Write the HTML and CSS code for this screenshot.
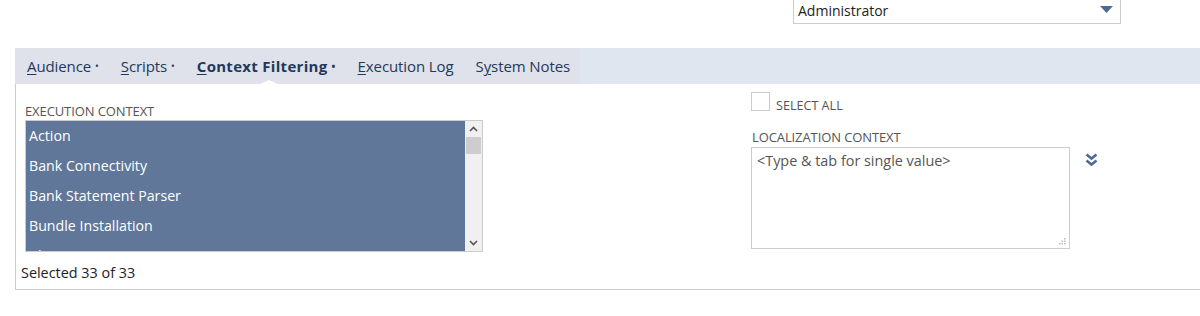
FILE: index.html
```html
<!DOCTYPE html>
<html>
<head>
<meta charset="utf-8">
<link rel="stylesheet" href="styles.css">
</head>
<body>
<div class="top">
  <div class="select">
    <span class="select-text">Administrator</span>
    <svg class="select-arrow" width="13" height="7" viewBox="0 0 13 7"><path d="M0 0H13L6.5 7Z" fill="#4d6a96"/></svg>
  </div>
</div>
<div class="tabbar">
  <div class="tabs">
    <span class="tab"><u>A</u>udience<span class="dot">•</span></span>
    <span class="tab"><u>S</u>cripts<span class="dot">•</span></span>
    <span class="tab active"><u>C</u>ontext Filtering<span class="dot">•</span></span>
    <span class="tab"><u>E</u>xecution Log</span>
    <span class="tab">S<u>y</u>stem Notes</span>
  </div>
</div>
<div class="panel">
  <div class="col-left">
    <div class="label">EXECUTION CONTEXT</div>
    <div class="multiselect">
      <div class="options">
        <div class="opt">Action</div>
        <div class="opt">Bank Connectivity</div>
        <div class="opt">Bank Statement Parser</div>
        <div class="opt">Bundle Installation</div>
        <div class="opt">Client</div>
      </div>
      <div class="scrollbar">
        <svg class="sb-arrow" width="9" height="6" viewBox="0 0 9 6"><path d="M1 5L4.5 1.5L8 5" fill="none" stroke="#555" stroke-width="1.6"/></svg>
        <div class="thumb"></div>
        <div class="sb-fill"></div>
        <svg class="sb-arrow" width="9" height="6" viewBox="0 0 9 6"><path d="M1 1L4.5 4.5L8 1" fill="none" stroke="#555" stroke-width="1.6"/></svg>
      </div>
    </div>
    <div class="count">Selected 33 of 33</div>
  </div>
  <div class="col-right">
    <div class="checkrow"><span class="checkbox"></span><span class="label-inline">SELECT ALL</span></div>
    <div class="label">LOCALIZATION CONTEXT</div>
    <div class="textrow">
      <div class="textarea">
        <span class="placeholder">&lt;Type &amp; tab for single value&gt;</span>
        <svg class="grip" width="7" height="7" viewBox="0 0 7 7" fill="#bbb"><rect x="5" y="0" width="1.5" height="1.5"/><rect x="2.5" y="2.5" width="1.5" height="1.5"/><rect x="5" y="2.5" width="1.5" height="1.5"/><rect x="0" y="5" width="1.5" height="1.5"/><rect x="2.5" y="5" width="1.5" height="1.5"/><rect x="5" y="5" width="1.5" height="1.5"/></svg>
      </div>
      <svg class="dchev" width="13" height="14" viewBox="0 0 13 14"><path d="M1.5 1.5L6.5 5.5L11.5 1.5M1.5 7.5L6.5 11.5L11.5 7.5" fill="none" stroke="#4d6a96" stroke-width="2.6"/></svg>
    </div>
  </div>
</div>
</body>
</html>
```

FILE: styles.css
```css
html, body {
  margin: 0;
  padding: 0;
  background: #fff;
  font-family: "Open Sans", "Liberation Sans", sans-serif;
  width: 1200px;
  height: 316px;
  overflow: hidden;
}
.top {
  height: 48px;
  display: flex;
}
.select {
  margin-left: 793px;
  margin-top: -7px;
  width: 328px;
  height: 31px;
  border: 1px solid #ccc;
  display: flex;
  align-items: flex-end;
  justify-content: space-between;
  padding: 0 7px 3px 4px;
  box-sizing: border-box;
}
.select-text {
  font-size: 14px;
  color: #222;
  line-height: 18px;
}
.select-arrow {
  margin-bottom: 7px;
}
.tabbar {
  margin-left: 15px;
  height: 36px;
  background: #dfe6f0;
  display: flex;
}
.tabs {
  width: 565px;
  background: #dfe2ea;
  display: flex;
  align-items: center;
  padding-left: 12px;
  box-sizing: border-box;
}
.tab {
  font-size: 15px;
  color: #24385b;
  margin-right: 22px;
  position: relative;
  white-space: nowrap;
  letter-spacing: -0.1px;
}
.tab u {
  text-decoration-thickness: 1px;
  text-underline-offset: 2px;
}
.tab .dot {
  font-size: 10px;
  margin-left: 4px;
  position: relative;
  top: -2px;
}
.tab.active {
  font-weight: 700;
  letter-spacing: 0.3px;
}
.tab.active::after {
  content: "";
  position: absolute;
  left: 59px;
  bottom: -10px;
  width: 0;
  height: 0;
  border-left: 13px solid transparent;
  border-right: 13px solid transparent;
  border-bottom: 6px solid #fff;
}
.panel {
  margin-left: 15px;
  height: 206px;
  border-left: 1px solid #ccc;
  border-bottom: 1px solid #ccc;
  display: flex;
  box-sizing: border-box;
}
.col-left {
  margin-left: 9px;
  width: 458px;
  padding-top: 19px;
}
.label {
  font-size: 13px;
  color: #555;
  line-height: 17px;
  letter-spacing: -0.1px;
}
.multiselect {
  margin-top: 0;
  width: 458px;
  height: 132px;
  border: 1px solid #ccc;
  box-sizing: border-box;
  display: flex;
  overflow: hidden;
}
.options {
  flex: 1;
  background: #607799;
  overflow: hidden;
}
.opt {
  height: 30px;
  line-height: 30px;
  color: #fff;
  font-size: 14.2px;
  padding-left: 3px;
}
.scrollbar {
  width: 17px;
  background: #f0f0f0;
  display: flex;
  flex-direction: column;
  align-items: center;
}
.sb-arrow {
  margin: 5px 0;
}
.thumb {
  width: 15px;
  height: 17px;
  background: #cdcdcd;
}
.sb-fill {
  flex: 1;
}
.count {
  margin-left: -4px;
  margin-top: 11px;
  font-size: 14.4px;
  line-height: 20px;
  color: #222;
}
.col-right {
  margin-left: 268px;
  padding-top: 8px;
}
.checkrow {
  display: flex;
  align-items: center;
  height: 18px;
  margin-bottom: 19px;
}
.checkbox {
  width: 17px;
  height: 17px;
  border: 1px solid #ccc;
}
.label-inline {
  font-size: 12.6px;
  color: #555;
  margin-left: 6px;
  margin-top: 8px;
}
.col-right .label {
  margin-left: 1px;
}
.textrow {
  display: flex;
  margin-top: 1px;
}
.textarea {
  width: 319px;
  height: 102px;
  border: 1px solid #ccc;
  box-sizing: border-box;
  position: relative;
  padding: 1px 5px;
}
.placeholder {
  font-size: 14.4px;
  color: #555;
}
.grip {
  position: absolute;
  right: 3px;
  bottom: 3px;
}
.dchev {
  margin-left: 15px;
  margin-top: 6px;
}
```
